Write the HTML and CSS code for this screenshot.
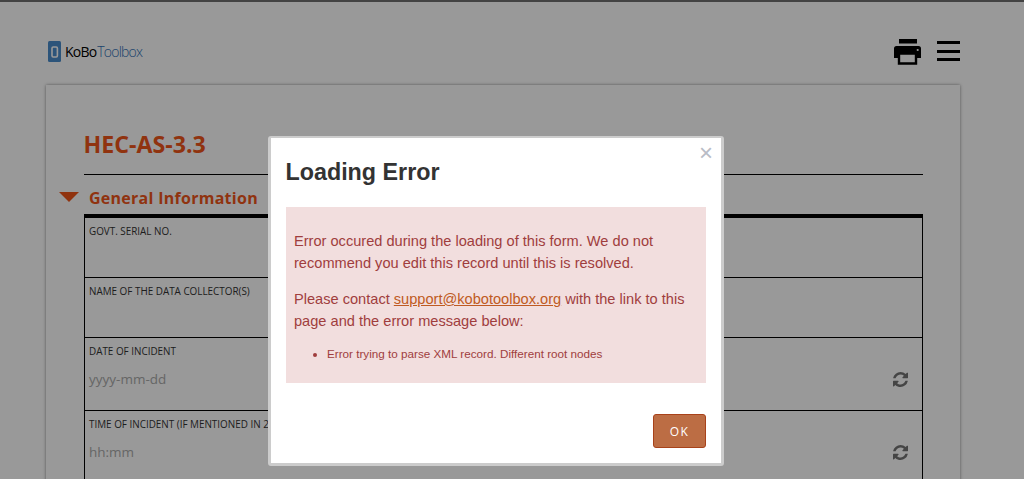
FILE: index.html
```html
<!DOCTYPE html>
<html lang="en">
<head>
<meta charset="utf-8">
<title>HEC-AS-3.3</title>
<link rel="stylesheet" href="styles.css">
</head>
<body>
<div class="page">
  <header class="topbar">
    <div class="logo">
      <svg class="logo-mark" width="13" height="21" viewBox="0 0 13 21"><rect width="13" height="21" rx="1.500" fill="#4a8ccc"/><rect x="4" y="6" width="5.400" height="10" rx="1.200" fill="none" stroke="#fff" stroke-width="1.600"/></svg>
      <span class="logo-text"><span class="logo-kobo">KoBo</span><span class="logo-toolbox">Toolbox</span></span>
    </div>
    <div class="actions">
      <svg class="print-icon" width="27" height="26" viewBox="0 0 27 26"><rect x="5" y="0" width="18" height="4.500" fill="#000"/><path d="M2.500 7h22a2.500 2.500 0 0 1 2.500 2.500V19h-4v-4H4v4H0V9.500A2.500 2.500 0 0 1 2.500 7z" fill="#000"/><path d="M5 14.500h17V24.500H5z" fill="none" stroke="#000" stroke-width="2.400"/><circle cx="23.700" cy="11" r="1.100" fill="#fff"/></svg>
      <div class="burger"><span class="bar"></span><span class="bar"></span><span class="bar"></span></div>
    </div>
  </header>
  <main class="card">
    <h1 class="form-title">HEC-AS-3.3</h1>
    <section class="group">
      <h2 class="group-title"><span class="caret"></span>General Information</h2>
      <div class="table">
        <div class="row row-a"><div class="label">GOVT. SERIAL NO.</div></div>
        <div class="row row-a"><div class="label">NAME OF THE DATA COLLECTOR(S)</div></div>
        <div class="row row-b"><div class="label">DATE OF INCIDENT</div><div class="value">yyyy-mm-dd</div>
          <svg class="refresh" width="15" height="15" viewBox="0 0 1536 1536"><path fill="#747474" d="M1511 928q0 5-1 7-64 268-268 434.500T764 1536q-146 0-282.500-55T238 1324l-129 129q-19 19-45 19t-45-19-19-45V960q0-26 19-45t45-19h448q26 0 45 19t19 45-19 45l-137 137q71 66 161 102t187 36q134 0 250-65t186-179q11-17 53-117 8-23 30-23h192q13 0 22.500 9.500t9.500 22.500zm25-800v448q0 26-19 45t-45 19h-448q-26 0-45-19t-19-45 19-45l138-138Q970 256 768 256q-134 0-250 65T332 500q-11 17-53 117-8 23-30 23H50q-13 0-22.500-9.500T18 608v-7q65-268 270-434.500T768 0q146 0 284 55.500T1297 212l130-129q19-19 45-19t45 19 19 45z"/></svg>
        </div>
        <div class="row row-b"><div class="label">TIME OF INCIDENT (IF MENTIONED IN 24 HOUR FORMAT)</div><div class="value">hh:mm</div>
          <svg class="refresh" width="15" height="15" viewBox="0 0 1536 1536"><path fill="#747474" d="M1511 928q0 5-1 7-64 268-268 434.500T764 1536q-146 0-282.500-55T238 1324l-129 129q-19 19-45 19t-45-19-19-45V960q0-26 19-45t45-19h448q26 0 45 19t19 45-19 45l-137 137q71 66 161 102t187 36q134 0 250-65t186-179q11-17 53-117 8-23 30-23h192q13 0 22.500 9.500t9.500 22.500zm25-800v448q0 26-19 45t-45 19h-448q-26 0-45-19t-19-45 19-45l138-138Q970 256 768 256q-134 0-250 65T332 500q-11 17-53 117-8 23-30 23H50q-13 0-22.500-9.500T18 608v-7q65-268 270-434.500T768 0q146 0 284 55.500T1297 212l130-129q19-19 45-19t45 19 19 45z"/></svg>
        </div>
      </div>
    </section>
  </main>
</div>
<div class="backdrop"></div>
<div class="modal" role="dialog">
  <span class="close">×</span>
  <h3 class="modal-title">Loading Error</h3>
  <div class="alert">
    <p class="alert-p">Error occured during the loading of this form. We do not recommend you edit this record until this is resolved.</p>
    <p class="alert-p">Please contact <a class="mail" href="#">support@kobotoolbox.org</a> with the link to this page and the error message below:</p>
    <ul class="errors"><li>Error trying to parse XML record. Different root nodes</li></ul>
  </div>
  <div class="modal-foot"><button class="ok">OK</button></div>
</div>
</body>
</html>
```
FILE: styles.css
```css
html, body {
  margin: 0;
  height: 479px;
  overflow: hidden;
  background: #fff;
  font-family: "Open Sans", sans-serif;
}
.page {
  border-top: 2px solid #707070;
  padding: 0 64px 0 46px;
  box-sizing: border-box;
  height: 479px;
  overflow: hidden;
}
.topbar {
  display: flex;
  justify-content: space-between;
  align-items: flex-start;
  height: 83px;
  box-sizing: border-box;
  padding: 37px 0 0 2px;
}
.logo {
  display: flex;
  align-items: center;
  gap: 4px;
  margin-top: 2px;
}
.logo-mark { display: block; }
.logo-text {
  font-family: "Open Sans", sans-serif;
  font-size: 14px;
  letter-spacing: -0.8px;
  line-height: 21px;
}
.logo-kobo { color: #000; margin-right: 1px; }
.logo-toolbox { color: #2f70b5; font-weight: 300; }
.actions {
  display: flex;
  align-items: flex-start;
  gap: 16px;
}
.print-icon { display: block; }
.burger {
  display: flex;
  flex-direction: column;
  gap: 5.500px;
  width: 23px;
  margin-top: 2px;
}
.bar { display: block; height: 3px; background: #000; }
.card {
  height: 500px;
  box-sizing: border-box;
  padding: 41px 37px 0 38px;
  width: 914px;
  background: #fff;
  box-shadow: 0 0 3px rgba(0, 0, 0, 0.45);
}
.form-title {
  margin: 0 0 0 -0.5px;
  font-size: 23.200px;
  line-height: 36px;
  font-weight: 700;
  color: #f0561a;
  padding-bottom: 12px;
  border-bottom: 1px solid #000;
}
.group-title {
  margin: 10px 0 0 -25px;
  display: flex;
  align-items: center;
  gap: 10px;
  font-size: 16px;
  line-height: 26px;
  font-weight: 700;
  letter-spacing: 0.27px;
  color: #f0561a;
}
.caret {
  width: 0;
  height: 0;
  border-left: 10px solid transparent;
  border-right: 10px solid transparent;
  border-top: 10px solid #f0561a;
  margin-top: -2px;
}
.table {
  margin-top: 3px;
  border: 1px solid #000;
  border-top: 4px solid #000;
}
.row {
  position: relative;
  box-sizing: border-box;
  padding: 4px 4px 0;
  border-bottom: 1px solid #000;
}
.row-a { height: 60px; }
.row-b { height: 73px; }
.label {
  font-size: 9.900px;
  line-height: 18px;
  color: #333;
}
.value {
  margin-top: 9px;
  font-size: 13.500px;
  line-height: 20px;
  color: #aaa;
}
.refresh {
  position: absolute;
  right: 14px;
  top: 34px;
}
.backdrop {
  position: fixed;
  inset: 0;
  background: rgba(0, 0, 0, 0.4);
}
.modal {
  position: fixed;
  left: 268px;
  top: 136px;
  width: 456px;
  height: 330px;
  box-sizing: border-box;
  background: #fff;
  border: 3px solid #ccc;
  border-top-width: 2px;
  border-radius: 3px;
  padding: 0 15px;
  font-family: "Liberation Sans", Arial, sans-serif;
}
.close {
  position: absolute;
  right: 8px;
  top: 3px;
  font-size: 24px;
  line-height: 24px;
  color: #b9bcc6;
}
.modal-title {
  margin: 0 0 0 -0.5px;
  padding-top: 20px;
  font-size: 23.300px;
  line-height: 28px;
  font-weight: 700;
  color: #333;
}
.alert {
  margin-top: 21px;
  height: 176px;
  box-sizing: border-box;
  padding: 23px 8px 0;
  background: #f2dede;
  color: #a03d3d;
  font-size: 14.600px;
  line-height: 22px;
}
.alert-p { margin: 0 0 14px; }
.mail { color: #bf5a22; }
.errors {
  margin: -1px 0 0;
  padding: 0 0 0 33px;
  font-size: 11.700px;
  line-height: 18px;
}
.modal-foot {
  display: flex;
  justify-content: flex-end;
  margin-top: 31px;
}
.ok {
  width: 53px;
  height: 34px;
  background: #bc6d44;
  border: 1px solid #a8421a;
  border-radius: 3px;
  color: #fff;
  font-family: "Open Sans", sans-serif;
  font-size: 12px;
  letter-spacing: 1.500px;
}
```
